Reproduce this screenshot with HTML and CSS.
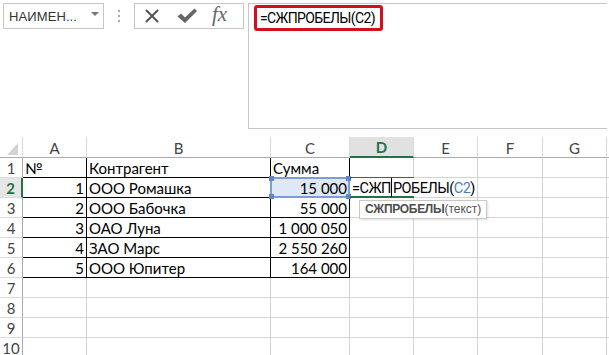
FILE: index.html
```html
<!DOCTYPE html>
<html lang="ru">
<head>
<meta charset="utf-8">
<title>СЖПРОБЕЛЫ</title>
<link rel="stylesheet" href="styles.css">
</head>
<body>
<div class="app">
  <div class="fbar">
    <div class="namebox">
      <span class="nb-text">НАИМЕН...</span>
      <span class="nb-arrow"></span>
    </div>
    <div class="grip"><i></i><i></i><i></i></div>
    <div class="btns">
      <svg class="ico-x" width="16" height="16" viewBox="0 0 16 16"><path d="M2 2 L14 14 M14 2 L2 14" stroke="#555" stroke-width="2" fill="none"/></svg>
      <svg class="ico-ok" width="22" height="18" viewBox="0 0 22 18"><path d="M1.5 9.5 L5 6.5 L9 10.5 L18.5 1.5 L21 4 L9 16 Z" fill="#666"/></svg>
      <span class="fx">fx</span>
    </div>
    <div class="finput">
      <span class="hl">=СЖПРОБЕЛЫ(C2)</span>
    </div>
  </div>
  <div class="sheet">
    <div class="hc corner"><span class="tri"></span></div>
    <div class="hc">A</div>
    <div class="hc">B</div>
    <div class="hc">C</div>
    <div class="hc sel">D</div>
    <div class="hc">E</div>
    <div class="hc">F</div>
    <div class="hc">G</div>
    <div class="hc last"></div>

    <div class="rh">1</div>
    <div class="c t">№</div>
    <div class="c t">Контрагент</div>
    <div class="c t">Сумма</div>
    <div class="c d1"></div>
    <div class="c"></div><div class="c"></div><div class="c"></div><div class="c last"></div>

    <div class="rh sel">2</div>
    <div class="c t r">1</div>
    <div class="c t">ООО Ромашка</div>
    <div class="c t r ref">15 000<span class="refbox"><i class="k1"></i><i class="k2"></i><i class="k3"></i><i class="k4"></i></span></div>
    <div class="c active">
      <div class="editor">=СЖП<span class="caret"></span>РОБЕЛЫ(<span class="blue">C2</span>)</div>
      <div class="tip"><b>СЖПРОБЕЛЫ</b>(текст)</div>
    </div>
    <div class="c e2"></div><div class="c"></div><div class="c"></div><div class="c last"></div>

    <div class="rh">3</div>
    <div class="c t r">2</div>
    <div class="c t">ООО Бабочка</div>
    <div class="c t r">55 000</div>
    <div class="c"></div><div class="c"></div><div class="c"></div><div class="c"></div><div class="c last"></div>

    <div class="rh">4</div>
    <div class="c t r">3</div>
    <div class="c t">ОАО Луна</div>
    <div class="c t r">1 000 050</div>
    <div class="c"></div><div class="c"></div><div class="c"></div><div class="c"></div><div class="c last"></div>

    <div class="rh">5</div>
    <div class="c t r">4</div>
    <div class="c t">ЗАО Марс</div>
    <div class="c t r">2 550 260</div>
    <div class="c"></div><div class="c"></div><div class="c"></div><div class="c"></div><div class="c last"></div>

    <div class="rh">6</div>
    <div class="c t r">5</div>
    <div class="c t">ООО Юпитер</div>
    <div class="c t r">164 000</div>
    <div class="c"></div><div class="c"></div><div class="c"></div><div class="c"></div><div class="c last"></div>

    <div class="rh">7</div>
    <div class="c"></div><div class="c"></div><div class="c"></div><div class="c"></div><div class="c"></div><div class="c"></div><div class="c"></div><div class="c last"></div>
    <div class="rh">8</div>
    <div class="c"></div><div class="c"></div><div class="c"></div><div class="c"></div><div class="c"></div><div class="c"></div><div class="c"></div><div class="c last"></div>
    <div class="rh">9</div>
    <div class="c"></div><div class="c"></div><div class="c"></div><div class="c"></div><div class="c"></div><div class="c"></div><div class="c"></div><div class="c last"></div>
    <div class="rh">10</div>
    <div class="c"></div><div class="c"></div><div class="c"></div><div class="c"></div><div class="c"></div><div class="c"></div><div class="c"></div><div class="c last"></div>
  </div>
</div>
</body>
</html>
```

FILE: styles.css
```css
* { box-sizing: border-box; }
html, body { margin: 0; padding: 0; background: #fff; }
body {
  width: 609px;
  height: 355px;
  overflow: hidden;
  font-family: Lato, "Liberation Sans", Arial, sans-serif;
  color: #000;
}
.app { display: flex; flex-direction: column; }

/* formula bar */
.fbar {
  display: flex;
  align-items: flex-start;
  padding: 3px 2px 0 3px;
  height: 137px;
}
.namebox {
  width: 101px;
  height: 26px;
  border: 1px solid #c6c6c6;
  display: flex;
  align-items: center;
  justify-content: space-between;
  padding: 0 4px 0 5px;
}
.nb-text { font-family: "Liberation Sans", Arial, sans-serif; font-size: 13px; color: #333; letter-spacing: 0.1px; }
.nb-arrow {
  width: 0; height: 0;
  border-left: 4px solid transparent;
  border-right: 4px solid transparent;
  border-top: 4px solid #777;
  margin-top: -4px;
}
.grip {
  width: 30px;
  height: 26px;
  display: flex;
  flex-direction: column;
  align-items: center;
  justify-content: center;
  gap: 3px;
}
.grip i { display: block; width: 2px; height: 2px; background: #aaa; }
.btns {
  width: 110px;
  height: 26px;
  border: 1px solid #c6c6c6;
  display: flex;
  align-items: center;
  padding-left: 9px;
}
.ico-x { margin-right: 16px; }
.ico-ok { margin-right: 14px; }
.fx {
  font-family: "Liberation Serif", "DejaVu Serif", serif;
  font-style: italic;
  font-size: 21px;
  color: #666;
  margin-top: -3px;
}
.finput {
  flex: 1;
  margin-left: 4px;
  height: 126px;
  border: 1px solid #c6c6c6;
  border-right: none;
  padding: 1px 0 0 5px;
}
.hl {
  display: inline-block;
  border: 3px solid #d0101c;
  border-radius: 3px;
  font-family: Roboto, Lato, sans-serif;
  font-size: 14px;
  letter-spacing: -0.6px;
  line-height: 20px;
  padding: 0 5px 0 3px;
}

/* sheet */
.sheet {
  display: grid;
  grid-template-columns: 23px 64px 184px 79px 64px 64px 65px 64px 1fr;
  grid-template-rows: 21px;
  grid-auto-rows: 20px;
  font-size: 15px;
}
.hc {
  border-right: 1px solid #dadada;
  border-bottom: 1px solid #ababab;
  color: #444;
  font-size: 15px;
  display: flex;
  align-items: center;
  justify-content: center;
  padding-top: 1px;
}
.hc.last { border-right: none; }
.hc.corner { position: relative; }
.tri {
  position: absolute;
  left: 7px;
  top: 6px;
  width: 0; height: 0;
  border-left: 11px solid transparent;
  border-bottom: 12px solid #d4d4d4;
}
.hc.sel {
  background: #e1e1e1;
  color: #217346;
  font-weight: bold;
  border-bottom: 2px solid #217346;
}
.rh {
  border-right: 1px solid #ababab;
  border-bottom: 1px solid #dadada;
  color: #444;
  font-size: 15px;
  display: flex;
  align-items: center;
  justify-content: center;
}
.rh.sel {
  background: #e6e6e6;
  color: #217346;
  font-weight: bold;
  border-right: 2px solid #217346;
}
.c {
  border-right: 1px solid #d4d4d4;
  border-bottom: 1px solid #d4d4d4;
  white-space: nowrap;
  display: flex;
  align-items: flex-end;
  padding: 0 2px 0 2px;
  line-height: 18px;
}
.c.last { border-right: none; }
.c.t { border-right-color: #000; border-bottom-color: #000; }
.c.r { justify-content: flex-end; }
.c.d1 { border-bottom-color: #217346; }

/* referenced cell C2 */
.c.ref { position: relative; background: #dfe8f5; }
.refbox {
  position: absolute;
  left: -1px; top: -1px; right: -1px; bottom: -1px;
  border: 2px solid #7d9dd4;
}
.refbox i {
  position: absolute;
  width: 5px; height: 5px;
  background: #5f86c8;
}
.refbox .k1 { left: -3px; top: -3px; }
.refbox .k2 { right: -3px; top: -3px; }
.refbox .k3 { left: -3px; bottom: -3px; }
.refbox .k4 { right: -3px; bottom: -3px; }

/* active edited cell D2 */
.c.active {
  position: relative;
  border-bottom: 2px solid #217346;
  border-top: 2px solid #217346;
  margin-top: -1px;
  height: 21px;
  overflow: visible;
  border-right: none;
}
.editor {
  position: absolute;
  left: 1px;
  top: -1px;
  height: 18px;
  width: 124px;
  background: #fff;
  white-space: nowrap;
  line-height: 18px;
  padding-left: 1px;
  font-family: Roboto, Lato, sans-serif;
  font-size: 14.5px;
  letter-spacing: -0.5px;
  z-index: 2;
}
.caret {
  display: inline-block;
  width: 1px;
  height: 19px;
  background: #000;
  vertical-align: -4px;
  margin: 0 1px 0 0;
}
.blue { color: #4a7cc7; }
.tip {
  position: absolute;
  left: 9px;
  top: 21px;
  height: 19px;
  padding: 0 5px;
  border: 1px solid #c8c8c8;
  background: #fff;
  box-shadow: 1px 1px 2px rgba(0,0,0,0.12);
  font-family: "Liberation Sans", Arial, sans-serif;
  font-size: 12px;
  line-height: 17px;
  color: #555;
  white-space: nowrap;
  z-index: 3;
}
.tip b { color: #4d4d4d; letter-spacing: -0.3px; }
.c.e2 { border-right: 1px solid #d4d4d4; }
```
